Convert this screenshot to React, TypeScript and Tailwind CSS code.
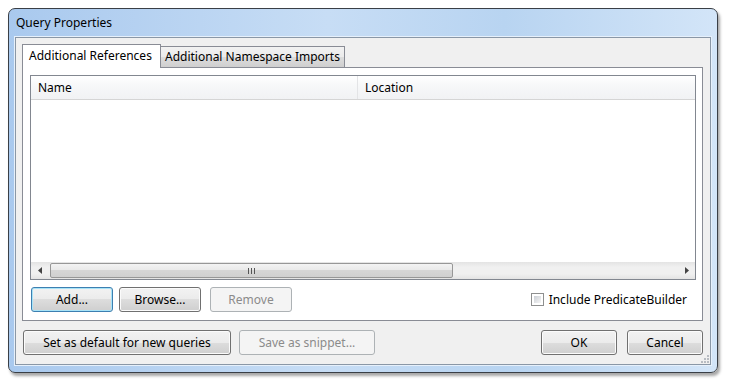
import type { ReactElement, ReactNode } from 'react';

const font = { fontFamily: '"Noto Sans", "Open Sans", sans-serif' };

type BtnKind = 'normal' | 'default' | 'disabled';

function WinButton({ kind = 'normal', className = '', children }: { kind?: BtnKind; className?: string; children: ReactNode }): ReactElement {
  if (kind === 'disabled') {
    return (
      <div className={`flex h-[25px] items-center justify-center rounded-[3px] border border-[#adb2b5] bg-[#f4f4f4] text-[12px] text-[#8b8b8b] ${className}`}>
        {children}
      </div>
    );
  }
  const border = kind === 'default' ? 'border-[#3c7fb1] shadow-[inset_0_0_0_1px_#a8e3f7]' : 'border-[#707070] shadow-[inset_0_0_0_1px_#fbfbfb]';
  return (
    <div
      className={`flex h-[25px] items-center justify-center rounded-[3px] border bg-[linear-gradient(#f2f2f2_0%,#ebebeb_50%,#dddddd_50%,#cfcfcf_100%)] text-[12px] text-black ${border} ${className}`}
    >
      {children}
    </div>
  );
}

function ScrollBar(): ReactElement {
  return (
    <div className="flex h-[17px] items-center bg-[linear-gradient(#e3e3e3,#f0f0f0_30%,#f0f0f0_70%,#e3e3e3)]">
      <div className="flex h-full w-[17px] items-center justify-center">
        <svg width="4" height="7" viewBox="0 0 4 7">
          <polygon points="4,0 0,3.5 4,7" fill="#444" />
        </svg>
      </div>
      <div className="ml-[2px] flex h-[15px] w-[403px] items-center justify-center rounded-[2px] border border-[#979797] bg-[linear-gradient(#f3f3f3,#e8e8e8_50%,#d6d6d6_50%,#d0d0d0)]">
        <svg width="7" height="6" viewBox="0 0 7 6">
          <rect x="0" y="0" width="1" height="6" fill="#555" />
          <rect x="3" y="0" width="1" height="6" fill="#555" />
          <rect x="6" y="0" width="1" height="6" fill="#555" />
        </svg>
      </div>
      <div className="flex-1" />
      <div className="flex h-full w-[17px] items-center justify-center">
        <svg width="4" height="7" viewBox="0 0 4 7">
          <polygon points="0,0 4,3.5 0,7" fill="#444" />
        </svg>
      </div>
    </div>
  );
}

function ListView(): ReactElement {
  return (
    <div className="flex h-[205px] w-[666px] flex-col border border-[#828790] bg-white">
      <div className="flex h-[24px] border-b border-[#d5d5d5] bg-[linear-gradient(#ffffff,#f7f8f9_40%,#f1f2f4)] text-[12px] text-black">
        <div className="flex w-[327px] items-center border-r border-[#e3e4e6] pl-[7px]">Name</div>
        <div className="flex flex-1 items-center pl-[7px]">Location</div>
      </div>
      <div className="flex-1" />
      <ScrollBar />
    </div>
  );
}

function ResizeGrip(): ReactElement {
  const dots = [
    [6, 0],
    [3, 3],
    [6, 3],
    [0, 6],
    [3, 6],
    [6, 6],
  ];
  return (
    <svg width="8" height="8" viewBox="0 0 8 8">
      {dots.map(([x, y]) => (
        <rect key={`${x}-${y}`} x={x} y={y} width="2" height="2" fill="#b8bcc2" />
      ))}
    </svg>
  );
}

export default function App(): ReactElement {
  return (
    <div className="h-[384px] w-[730px] bg-white pl-[8px] pt-[8px]" style={font}>
      <div className="flex h-[365px] w-[710px] flex-col rounded-[7px] border border-[#3a3f46] bg-[linear-gradient(90deg,#a9c9ee,#c7ddf5_45%,#b8d4f1_70%,#d3e5f8)] shadow-[2px_3px_3px_rgba(0,0,0,0.35)]">
        <div className="flex h-[28px] items-center pl-[7px] text-[12px] text-black">Query Properties</div>
        <div className="mx-[6px] flex h-[328px] flex-col border border-[#8a97a6] bg-[#f0f0f0] px-[6px] pt-[6px] shadow-[0_0_0_1px_#e6f0fb]">
          <div className="flex h-[23px] items-end">
            <div className="relative z-10 mb-[-1px] flex h-[24px] w-[139px] items-start border border-b-0 border-[#898c95] bg-white pl-[6px] pt-[2px] text-[12px] text-black">
              Additional References
            </div>
            <div className="flex h-[21px] w-[184px] items-center border border-l-0 border-b-0 border-[#898c95] bg-[linear-gradient(#f2f2f2,#ebebeb_50%,#dddddd_50%,#cfcfcf)] pl-[4px] text-[12px] text-black">
              Additional Namespace Imports
            </div>
          </div>
          <div className="flex h-[254px] w-[681px] flex-col border border-[#898c95] bg-white pl-[7px] pt-[7px]">
            <ListView />
            <div className="mt-[7px] flex items-center pr-[15px]">
              <WinButton kind="default" className="ml-[1px] w-[82px]">Add...</WinButton>
              <WinButton className="ml-[6px] w-[82px]">Browse...</WinButton>
              <WinButton kind="disabled" className="ml-[9px] w-[82px]">Remove</WinButton>
              <div className="flex-1" />
              <div className="flex items-center">
                <div className="h-[13px] w-[13px] border border-[#8e8f8f] bg-white p-[2px]">
                  <div className="h-full w-full bg-[linear-gradient(135deg,#cbcfd5,#f6f6f6)]" />
                </div>
                <span className="ml-[5px] text-[12px] text-black">Include PredicateBuilder</span>
              </div>
            </div>
          </div>
          <div className="mt-[9px] flex items-center">
            <WinButton className="ml-[1px] w-[208px]">Set as default for new queries</WinButton>
            <WinButton kind="disabled" className="ml-[8px] w-[136px]">Save as snippet...</WinButton>
            <div className="flex-1" />
            <WinButton className="w-[76px]">OK</WinButton>
            <WinButton className="ml-[10px] w-[76px]">Cancel</WinButton>
            <div className="w-[1px]" />
          </div>
          <div className="-mr-[5px] flex flex-1 items-end justify-end pb-[1px]">
            <ResizeGrip />
          </div>
        </div>
      </div>
    </div>
  );
}
